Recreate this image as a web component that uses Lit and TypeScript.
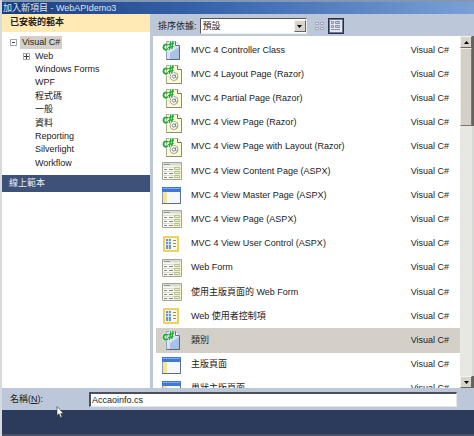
import { LitElement, html, css, svg } from "lit";
import { customElement, state } from "lit/decorators.js";
import { classMap } from "lit/directives/class-map.js";

type Kind = "class" | "razor" | "form" | "master" | "control";

interface Template {
  name: string;
  kind: Kind;
}

const TEMPLATES: Template[] = [
  { name: "MVC 4 Controller Class", kind: "class" },
  { name: "MVC 4 Layout Page (Razor)", kind: "razor" },
  { name: "MVC 4 Partial Page (Razor)", kind: "razor" },
  { name: "MVC 4 View Page (Razor)", kind: "razor" },
  { name: "MVC 4 View Page with Layout (Razor)", kind: "razor" },
  { name: "MVC 4 View Content Page (ASPX)", kind: "form" },
  { name: "MVC 4 View Master Page (ASPX)", kind: "master" },
  { name: "MVC 4 View Page (ASPX)", kind: "form" },
  { name: "MVC 4 View User Control (ASPX)", kind: "control" },
  { name: "Web Form", kind: "form" },
  { name: "使用主版頁面的 Web Form", kind: "form" },
  { name: "Web 使用者控制項", kind: "control" },
  { name: "類別", kind: "class" },
  { name: "主版頁面", kind: "master" },
  { name: "巢狀主版頁面", kind: "master" },
];

const CATEGORIES = [
  "Windows Forms",
  "WPF",
  "程式碼",
  "一般",
  "資料",
  "Reporting",
  "Silverlight",
  "Workflow",
];

// The "C#" badge in the corner of code files.
const sharp = svg`
  <g fill="none" stroke="#fff" stroke-width="3.4" opacity=".7">
    <path d="M5.400 5.200C4.200 3.800 1.600 4.600 1.500 7.200C1.500 9.600 4 10.400 5.600 8.800" />
    <path d="M7.400 10L8.800 1.500M9.800 9.200L11 1" />
  </g>
  <g fill="none" stroke="#27a838">
    <path d="M5.600 5.200C4.200 3.800 1.600 4.600 1.500 7.200C1.500 9.600 4 10.400 5.800 8.800" stroke-width="2" />
    <path d="M7.400 10L8.800 1.500M9.800 9.200L11 1M6.400 4.600L12 3.400M6 7.600L11.600 6.400" stroke-width="1.400" />
  </g>`;

const ICONS = {
  class: svg`
    <path d="M4.500 1.500h9l4 4v14h-13z" fill="#d8e4f5" stroke="#93a1b6" />
    <path d="M8 19V13l9-6v12z" fill="#a9c1e6" />
    <path d="M13.500 1.500v4h4" fill="#fff" stroke="#5f7188" />
    <path d="M17.500 6v13.500h-13" fill="none" stroke="#566a86" />
    ${sharp}`,
  razor: svg`
    <path d="M4.500 1.500h11l4 4v14h-15z" fill="#fbfad0" stroke="#a9a78c" />
    <path d="M15.500 1.500v4h4" fill="#fff" stroke="#77766a" />
    <path d="M19.500 6v13.500h-15" fill="none" stroke="#8c8b74" />
    <circle cx="12" cy="12.500" r="4" fill="#fff" stroke="#a0a0a0" />
    <circle cx="11.800" cy="12.500" r="1.600" fill="none" stroke="#808080" />
    <path d="M13.600 10.600v2.600q.8 1.400 2.200 0" fill="none" stroke="#808080" />
    ${sharp}`,
  form: svg`
    <path d="M.5 1.500h19v17h-19z" fill="#fbfaf0" stroke="#a3a695" />
    <path d="M1 2h18v2.500H1z" fill="#d5dbd8" />
    <path d="M2 3.500h6" stroke="#8f9aa0" />
    <path d="M12 5h7v13h-7z" fill="#f5f0bc" />
    <path d="M12.500 6.500h5v2h-5zM12.500 10.500h5v2h-5zM12.500 14.500h5v2h-5z" fill="#e4f0dc" stroke="#b4c0a4" />
    <path d="M2 8.500h3M2 12.500h3M2 16.500h3M7 8.500h4M7 12.500h4M7 16.500h4" stroke="#85898a" />
    <path d="M1 6.500h11M1 10.500h11M1 14.500h11" stroke="#dcdcd2" />`,
  master: svg`
    <path d="M.5 2.500h18v16H.5z" fill="#f5f9ff" stroke="#8a9bb8" />
    <path d="M0 2h19v5H0z" fill="#4178d4" />
    <path d="M1 3h17v1H1z" fill="#7fa8ea" />
    <path d="M1 7h4v11H1z" fill="#f8e58c" />
    <path d="M18.500 7v11.500H0" fill="none" stroke="#5b6d91" />`,
  control: svg`
    <path d="M2 3h14v14H2z" fill="#fffbe0" stroke="#ecd25c" stroke-width="2" />
    <path d="M4 5h5v10H4z" fill="#6b93cf" />
    <path d="M4 7.500h5M4 10.500h5M6.500 5v10" stroke="#d5e2f4" />
    <path d="M11 6.500h3M11 9.500h3M11 12.500h3" stroke="#8d8a75" />`,
};

@customElement("app-root")
export class AddItemDialog extends LitElement {
  @state() private selected = 12;

  static styles = css`
    :host {
      display: flex;
      flex-direction: column;
      box-sizing: border-box;
      height: 100vh;
      padding-left: 2px;
      background: #d5dade;
      color: #222;
      font: 9px/13px "Liberation Sans", "Noto Sans CJK TC", sans-serif;
      overflow: hidden;
    }
    * {
      box-sizing: border-box;
    }
    ul {
      list-style: none;
      margin: 0;
      padding: 0;
    }
    button,
    input,
    select {
      font: inherit;
      color: inherit;
      margin: 0;
      padding: 0;
      border-radius: 0;
    }
    .title {
      flex: none;
      height: 14px;
      margin: 0;
      padding-left: 1px;
      border-top: 2px solid #8197b4;
      background: linear-gradient(90deg, #1d3d7a, #3865ae 45%, #7aa0d6);
      color: #dce5f5;
      font-size: 9px;
      font-weight: normal;
      line-height: 12px;
    }
    .main {
      flex: 1;
      min-height: 0;
      display: grid;
      grid-template-columns: 148px 1fr;
      gap: 3px;
      background: #bcc7d9;
    }
    .side {
      background: #fff;
    }
    .head {
      height: 18px;
      margin: 0;
      padding-left: 8px;
      background: #ffe9b4;
      font-size: 9px;
      line-height: 16px;
    }
    .tree {
      display: grid;
      grid-auto-rows: 1fr;
      align-items: center;
      height: 134px;
      margin: 4px 0 5px;
      padding-left: 8px;
    }
    .tree li {
      display: flex;
      align-items: center;
      gap: 3px;
    }
    .tree .child {
      gap: 5px;
      padding-left: 13px;
    }
    .tree .leaf {
      padding-left: 25px;
    }
    .tree .current {
      background: #d4d0c8;
      padding: 0 2px;
    }
    .toggle {
      width: 7px;
      height: 7px;
      border: 1px solid #a8a8a8;
      background: #fff;
      display: block;
    }
    .toggle svg {
      display: block;
      width: 5px;
      height: 5px;
    }
    .online {
      display: block;
      width: 100%;
      height: 17px;
      padding-left: 7px;
      border: 0;
      background: #3e5178;
      color: #e6ebf5;
      text-align: left;
    }
    .content {
      min-width: 0;
      min-height: 0;
      display: flex;
      flex-direction: column;
    }
    .bar {
      flex: none;
      height: 22px;
      padding: 2px 0 0 5px;
      display: flex;
      align-items: center;
    }
    .sort {
      position: relative;
      width: 107px;
      height: 16px;
      margin: 0 5px 0 3px;
    }
    .sort select {
      appearance: none;
      display: block;
      width: 100%;
      height: 100%;
      padding-left: 2px;
      border: 1px solid #eee;
      border-top-color: #555;
      border-left-color: #555;
      background: #fff;
      outline: 0;
    }
    .arrow {
      display: grid;
      place-items: center;
      width: 12px;
      height: 12px;
      padding: 0;
      background: #d8d4cc;
      border: 1px solid #f4f2ee;
      border-right-color: #666;
      border-bottom-color: #666;
    }
    .arrow svg {
      width: 5px;
      height: 3px;
    }
    .sort .arrow {
      position: absolute;
      right: 1px;
      top: 2px;
      pointer-events: none;
    }
    .view {
      width: 16px;
      height: 16px;
      border: 1px solid transparent;
      background: none;
      display: grid;
      place-items: center;
    }
    .view.on {
      border-color: #26304d;
      outline: 1px solid #6b7691;
      outline-offset: -2px;
      background: #e3e6ee;
    }
    .view svg {
      width: 11px;
      height: 10px;
    }
    .list {
      flex: 1;
      min-height: 0;
      display: grid;
      grid-template-columns: 1fr 12px;
      padding-right: 2px;
      background: linear-gradient(#636363 90px, #d8d8d8 90px, #d8d8d8 340px, #636363 340px) right / 2px 100% no-repeat;
    }
    .rows {
      min-height: 0;
      overflow: hidden;
      padding: 2px 0 0 3px;
      background: #fff;
    }
    .rows ul {
      display: grid;
      grid-auto-rows: 1fr;
      height: 363px;
    }
    .row {
      width: 100%;
      height: 100%;
      display: flex;
      align-items: center;
      padding: 0 11px 0 6px;
      border: 0;
      background: none;
      text-align: left;
    }
    .row.on {
      background: #d4d0c8;
    }
    .row svg {
      flex: none;
      width: 20px;
      height: 20px;
      margin-right: 9px;
    }
    .row .name {
      flex: 1;
      white-space: nowrap;
    }
    .scroll {
      min-height: 0;
      display: flex;
      flex-direction: column;
      background: #e9e7e3;
    }
    .thumb {
      height: 78px;
      margin-bottom: auto;
      background: #d4d0c8;
      border: 1px solid #f0eee9;
      border-right-color: #777;
      border-bottom-color: #777;
    }
    .namebar {
      flex: none;
      display: flex;
      align-items: center;
      height: 22px;
      padding: 0 17px 0 8px;
      background: #bcc7d9;
    }
    .namebar label {
      width: 79px;
    }
    .namebar input {
      flex: 1;
      min-width: 0;
      height: 15px;
      padding-left: 1px;
      border: 1px solid #e6e6e6;
      border-top: 2px solid #4a4f58;
      border-left: 2px solid #4a4f58;
      background: #fff;
      outline: 0;
    }
    .foot {
      flex: none;
      position: relative;
      height: 26px;
      background: #2c3b5b;
      border-bottom: 2px solid #4a5064;
    }
    .pointer {
      position: absolute;
      left: 54px;
      top: -4px;
      width: 8px;
      height: 12px;
    }
  `;

  private arrow(up = false) {
    return html`<svg viewBox="0 0 5 3" aria-hidden="true">
      <path d=${up ? "M0 3h5L2.500 0z" : "M0 0h5L2.500 3z"} fill="#000" />
    </svg>`;
  }

  private toggle(label: string, open: boolean) {
    return html`<button class="toggle" aria-label=${label} aria-expanded=${open}>
      <svg viewBox="0 0 5 5" stroke="#444" fill="none">
        <path d=${open ? "M1 2.500h3" : "M0 2.500h5M2.500 0v5"} />
      </svg>
    </button>`;
  }

  render() {
    return html`
      <h1 class="title">加入新項目 - WebAPIdemo3</h1>
      <div class="main">
        <nav class="side">
          <h2 class="head">已安裝的範本</h2>
          <ul class="tree">
            <li>${this.toggle("Visual C#", true)}<span class="current">Visual C#</span></li>
            <li class="child">${this.toggle("Web", false)}<span>Web</span></li>
            ${CATEGORIES.map((c) => html`<li class="leaf">${c}</li>`)}
          </ul>
          <button class="online">線上範本</button>
        </nav>
        <section class="content">
          <div class="bar">
            <label for="sort">排序依據:</label>
            <div class="sort">
              <select id="sort"><option>預設</option></select>
              <span class="arrow">${this.arrow()}</span>
            </div>
            <button class="view" aria-label="小圖示">
              <svg viewBox="0 0 11 10" fill="#e6e8ec" stroke="#a0a6b4">
                <path d="M1.500 1.500h3v2h-3zM6.500 1.500h3v2h-3zM1.500 6.500h3v2h-3zM6.500 6.500h3v2h-3z" />
              </svg>
            </button>
            <button class="view on" aria-label="中圖示">
              <svg viewBox="0 0 11 10" fill="#c3cbe0" stroke="#8b93ab">
                <path d="M1.500 .5h2v2h-2zM1.500 4.500h2v2h-2zM5.500 .5h4v2h-4zM5.500 4.500h4v2h-4zM1 8.500h9" />
              </svg>
            </button>
          </div>
          <div class="list">
            <div class="rows">
              <ul>
                ${TEMPLATES.map(
                  (t, i) => html`<li>
                    <button
                      class=${classMap({ row: true, on: i === this.selected })}
                      @click=${() => (this.selected = i)}
                    >
                      <svg viewBox="0 0 20 20" aria-hidden="true">${ICONS[t.kind]}</svg>
                      <span class="name">${t.name}</span>
                      <span>Visual C#</span>
                    </button>
                  </li>`
                )}
              </ul>
            </div>
            <div class="scroll">
              <button class="arrow" aria-label="向上捲動">${this.arrow(true)}</button>
              <div class="thumb"></div>
              <button class="arrow" aria-label="向下捲動">${this.arrow()}</button>
            </div>
          </div>
        </section>
      </div>
      <div class="namebar">
        <label for="name">名稱(<u>N</u>):</label>
        <input id="name" type="text" value="Accaoinfo.cs" />
      </div>
      <div class="foot">
        <svg class="pointer" viewBox="0 0 8 12" aria-hidden="true">
          <path d="M1 .5v9l2-1.700L4.500 11.500 6 11 4.700 7.500h2.800z" fill="#fff" stroke="#333" stroke-width=".6" />
        </svg>
      </div>
    `;
  }
}
